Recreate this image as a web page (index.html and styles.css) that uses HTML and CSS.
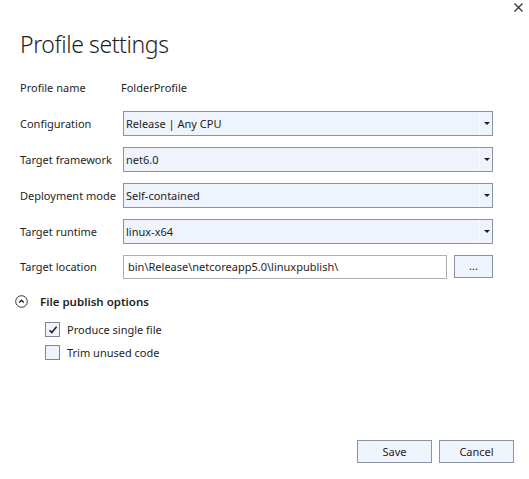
FILE: index.html
```html
<!DOCTYPE html>
<html>
<head>
<meta charset="utf-8">
<link rel="stylesheet" href="styles.css">
</head>
<body>
<div class="dialog">
  <div class="close" aria-label="Close">
    <svg width="9" height="9" viewBox="0 0 9 9"><path d="M0.5 0.5 L8.5 8.5 M8.5 0.5 L0.5 8.5" stroke="#333" stroke-width="1.3"/></svg>
  </div>
  <h1 class="title">Profile settings</h1>
  <div class="form">
    <div class="label">Profile name</div>
    <div class="value">FolderProfile</div>

    <div class="label">Configuration</div>
    <div class="combo"><span class="combo-text">Release | Any CPU</span><span class="combo-btn"><span class="arrow"></span></span></div>

    <div class="label">Target framework</div>
    <div class="combo"><span class="combo-text">net6.0</span><span class="combo-btn"><span class="arrow"></span></span></div>

    <div class="label">Deployment mode</div>
    <div class="combo"><span class="combo-text">Self-contained</span><span class="combo-btn"><span class="arrow"></span></span></div>

    <div class="label">Target runtime</div>
    <div class="combo"><span class="combo-text">linux-x64</span><span class="combo-btn"><span class="arrow"></span></span></div>

    <div class="label">Target location</div>
    <div class="location">
      <div class="textbox">bin\Release\netcoreapp5.0\linuxpublish\</div>
      <div class="btn browse">...</div>
    </div>
  </div>

  <div class="expander">
    <svg class="chev" width="13" height="13" viewBox="0 0 13 13"><circle cx="6.5" cy="6.5" r="5.8" fill="none" stroke="#333" stroke-width="1"/><path d="M4.2 7.6 L6.5 5.3 L8.8 7.6" fill="none" stroke="#222" stroke-width="1.4"/></svg>
    <span class="expander-title">File publish options</span>
  </div>
  <div class="options">
    <div class="check-row">
      <span class="checkbox"><svg width="12" height="12" viewBox="0 0 12 12"><path d="M2.5 6.2 L4.8 8.6 L9.6 2.8" fill="none" stroke="#222" stroke-width="1.6"/></svg></span>
      <span>Produce single file</span>
    </div>
    <div class="check-row">
      <span class="checkbox"></span>
      <span>Trim unused code</span>
    </div>
  </div>

  <div class="footer">
    <div class="btn action">Save</div>
    <div class="btn action">Cancel</div>
  </div>
</div>
</body>
</html>
```

FILE: styles.css
```css
* { box-sizing: border-box; }
html, body { margin: 0; padding: 0; background: #ffffff; }
body {
  font-family: "Noto Sans", "Open Sans", sans-serif;
  font-size: 11px;
  color: #1e1e1e;
}
.dialog {
  position: relative;
  width: 529px;
  height: 479px;
  padding: 29px 36px 0 20px;
  display: flex;
  flex-direction: column;
}
.close {
  position: absolute;
  top: 3px;
  right: 6px;
  width: 9px;
  height: 9px;
  display: flex;
}
.title {
  margin: 0;
  font-weight: 300;
  font-size: 23px;
  line-height: 30px;
  letter-spacing: -0.4px;
  color: #1e1e1e;
}
.form {
  margin-top: 17px;
  display: grid;
  grid-template-columns: 103px 1fr;
  row-gap: 11px;
  align-items: center;
}
.label { line-height: 16px; white-space: nowrap; }
.value { height: 24px; line-height: 24px; margin-left: -2px; }
.combo {
  height: 25px;
  border: 1px solid #8a93a5;
  background: #eff3fc;
  display: flex;
  align-items: stretch;
}
.combo-text {
  flex: 1;
  padding-left: 2px;
  line-height: 23px;
  white-space: nowrap;
}
.combo-btn {
  width: 13px;
  border-left: 1px solid #fafbfe;
  display: flex;
  align-items: center;
  justify-content: center;
}
.arrow {
  width: 0; height: 0;
  border-left: 3px solid transparent;
  border-right: 3px solid transparent;
  border-top: 3px solid #1e1e1e;
  margin-left: 1px;
}
.location {
  display: flex;
  gap: 7px;
  height: 24px;
}
.textbox {
  flex: 1;
  border: 1px solid #a8adb6;
  background: #ffffff;
  line-height: 22px;
  padding-left: 4px;
  white-space: nowrap;
}
.btn {
  border: 1px solid #8a93a5;
  background: #eff3fc;
  display: flex;
  align-items: center;
  justify-content: center;
}
.browse { width: 39px; height: 23px; padding-bottom: 2px; }
.expander {
  margin-top: 12px;
  margin-left: -5px;
  height: 20px;
  display: flex;
  align-items: center;
  gap: 12px;
}
.expander-title { font-weight: 600; font-size: 11.5px; }
.options {
  margin-top: 11px;
  padding-left: 25px;
  display: flex;
  flex-direction: column;
  gap: 8px;
}
.check-row {
  display: flex;
  align-items: center;
  gap: 7px;
  height: 15px;
}
.checkbox {
  width: 15px;
  height: 15px;
  border: 1px solid #7d879a;
  background: #eff3fc;
  display: flex;
  align-items: center;
  justify-content: center;
}
.footer {
  margin-top: auto;
  margin-bottom: 16px;
  margin-right: -21px;
  display: flex;
  justify-content: flex-end;
  gap: 7px;
}
.action { width: 75px; height: 23px; }
```
